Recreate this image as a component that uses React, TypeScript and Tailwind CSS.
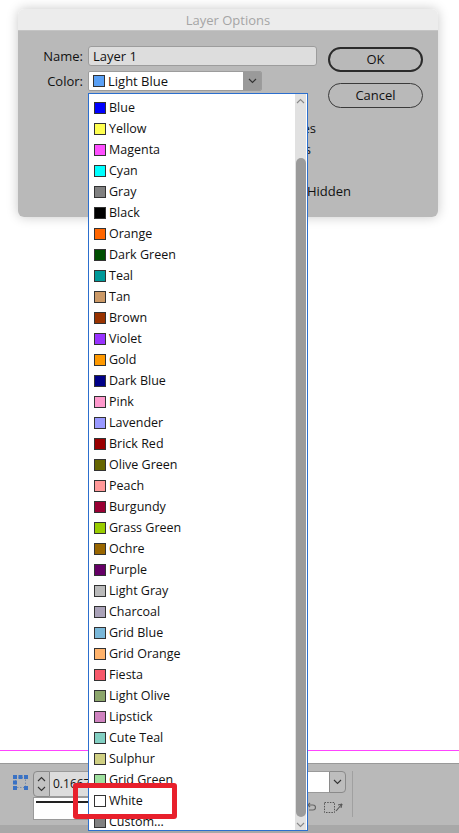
import React from "react";

const items: [string, string][] = [
  ["Blue", "#0000ff"],
  ["Yellow", "#ffff4f"],
  ["Magenta", "#ff4fff"],
  ["Cyan", "#00ffff"],
  ["Gray", "#808080"],
  ["Black", "#000000"],
  ["Orange", "#ff6600"],
  ["Dark Green", "#005000"],
  ["Teal", "#009999"],
  ["Tan", "#cc9966"],
  ["Brown", "#993300"],
  ["Violet", "#9933ff"],
  ["Gold", "#ff9900"],
  ["Dark Blue", "#000087"],
  ["Pink", "#ff99cc"],
  ["Lavender", "#9999ff"],
  ["Brick Red", "#990000"],
  ["Olive Green", "#666600"],
  ["Peach", "#ff9999"],
  ["Burgundy", "#990033"],
  ["Grass Green", "#99cc00"],
  ["Ochre", "#996600"],
  ["Purple", "#660066"],
  ["Light Gray", "#bababa"],
  ["Charcoal", "#aaa2b8"],
  ["Grid Blue", "#7ab8d9"],
  ["Grid Orange", "#ffb36b"],
  ["Fiesta", "#f7596b"],
  ["Light Olive", "#8ca66b"],
  ["Lipstick", "#cf82bf"],
  ["Cute Teal", "#82cfc2"],
  ["Sulphur", "#cfcf82"],
  ["Grid Green", "#9ee09e"],
  ["White", "#ffffff"],
  ["Custom...", "#808080"],
];

function ChevDown({ color = "#333" }: { color?: string }) {
  return (
    <svg width="9" height="6" viewBox="0 0 9 6">
      <path d="M1 1 L4.5 4.5 L8 1" fill="none" stroke={color} strokeWidth="1.1" />
    </svg>
  );
}
function ChevUp({ color = "#333" }: { color?: string }) {
  return (
    <svg width="9" height="6" viewBox="0 0 9 6">
      <path d="M1 5 L4.5 1.5 L8 5" fill="none" stroke={color} strokeWidth="1.1" />
    </svg>
  );
}

export default function App() {
  return (
    <div
      className="relative w-[459px] h-[833px] overflow-hidden bg-white text-[#111]"
      style={{ fontFamily: '"Open Sans", "DejaVu Sans", sans-serif' }}
    >
      {/* Dialog */}
      <div className="pt-[9px] pl-[18px]">
        <div className="w-[420px] h-[208px] rounded-[6px] overflow-hidden shadow-[0_0_12px_rgba(0,0,0,0.22)] flex flex-col">
          <div className="h-[22px] bg-[#ececec] border-b border-[#c4c4c4] text-center text-[13px] leading-[22px] text-[#a5a5a5]">
            Layer Options
          </div>
          <div className="flex-1 bg-[#b9b9b9] flex">
            <div className="w-[299px] flex flex-col">
              <div className="mt-[15px] flex items-center h-[20px]">
                <div className="w-[65px] text-right text-[13px] leading-[20px]">Name:</div>
                <div className="ml-[5px] w-[229px] h-[20px] bg-[#dddddd] border border-[#9c9c9c] rounded-[3px] text-[13px] leading-[18px] pl-[4px]">
                  Layer 1
                </div>
              </div>
              <div className="mt-[5px] flex items-center h-[20px]">
                <div className="w-[65px] text-right text-[13px] leading-[20px]">Color:</div>
                <div className="ml-[5px] w-[174px] h-[20px] flex border border-[#9c9c9c] rounded-[2px] overflow-hidden">
                  <div className="flex-1 bg-white flex items-center pl-[4px] gap-[3px]">
                    <span className="w-[12px] h-[12px] bg-[#5aa0f5] border border-[#333]" />
                    <span className="text-[13px] leading-[18px]">Light Blue</span>
                  </div>
                  <div className="w-[18px] bg-[#9a9a9a] flex items-center justify-center">
                    <ChevDown />
                  </div>
                </div>
              </div>
              <div className="mt-[27px] flex flex-col text-[13px] leading-[21px] whitespace-nowrap">
                <div className="h-[21px] text-right pr-[1px]">es</div>
                <div className="h-[21px] text-right pr-[6px]">s</div>
                <div className="h-[21px]" />
                <div className="h-[21px] w-[333px] text-right">Hidden</div>
              </div>
            </div>
            <div className="ml-[11px] flex flex-col">
              <div className="mt-[16px] w-[95px] h-[25px] rounded-full border-2 border-[#2b2b2b] flex items-center justify-center text-[13px]">
                OK
              </div>
              <div className="mt-[11px] w-[95px] h-[25px] rounded-full border border-[#3a3a3a] flex items-center justify-center text-[13px]">
                Cancel
              </div>
            </div>
          </div>
        </div>
      </div>

      {/* Canvas area with guide */}
      <div className="mt-[533px] h-px bg-[#ff44ff]" />
      <div className="h-[12px]" />

      {/* Bottom toolbar */}
      <div className="h-[70px] flex flex-col">
        <div className="h-[62px] bg-[#b9b9b9] border-t border-[#999999] flex items-start pt-[7px]">
          <div className="pl-[13px] pt-[4px]">
            <svg width="15" height="15" viewBox="0 0 15 15">
              <rect x="2.5" y="2.5" width="10" height="10" fill="none" stroke="#7a8ca8" strokeWidth="1" strokeDasharray="1.5 1.5" />
              <rect x="0" y="0" width="4" height="4" fill="#3a72c4" />
              <rect x="11" y="0" width="4" height="4" fill="#3a72c4" />
              <rect x="0" y="11" width="4" height="4" fill="#3a72c4" />
              <rect x="11" y="11" width="4" height="4" fill="#3a72c4" />
              <rect x="5.5" y="0" width="4" height="4" fill="#3a72c4" />
              <rect x="0" y="5.5" width="4" height="4" fill="#3a72c4" />
            </svg>
          </div>
          <div className="ml-[5px] flex flex-col">
            <div className="flex h-[26px]">
              <div className="w-[17px] h-[26px] border border-[#8a8a8a] rounded-l-[4px] bg-[#c2c2c2] flex flex-col items-center justify-center gap-[4px]">
                <ChevUp />
                <ChevDown />
              </div>
              <div className="w-[60px] h-[26px] bg-[#dddddd] border-y border-r border-[#9a9a9a] text-[12px] leading-[24px] pl-[3px]">
                0.1667 in
              </div>
            </div>
            <div className="w-[77px] h-[23px] bg-white border border-[#9a9a9a] relative">
              <div className="absolute left-[2px] right-0 top-[3px] h-[2px] bg-[#222]" />
            </div>
          </div>
          <div className="flex-1" />
          <div className="flex flex-col">
            <div className="flex h-[22px]">
              <div className="w-[40px] bg-white border-y border-l border-[#9a9a9a]" />
              <div className="w-[17px] border border-[#8a8a8a] rounded-r-[4px] bg-[#bdbdbd] flex items-center justify-center">
                <ChevDown />
              </div>
            </div>
            <div className="mt-[8px] flex items-center gap-[8px] pl-[17px]">
              <svg width="10" height="10" viewBox="0 0 10 10">
                <path d="M2 3 H7 A2.5 2.5 0 0 1 7 8 H3" fill="none" stroke="#666" strokeWidth="1.2" />
                <path d="M4 1 L2 3 L4 5" fill="none" stroke="#666" strokeWidth="1.2" />
              </svg>
              <svg width="19" height="12" viewBox="0 0 19 12">
                <rect x="0.5" y="1.5" width="10" height="10" fill="none" stroke="#555" strokeWidth="1" strokeDasharray="1.5 1.2" />
                <path d="M12 10 L18 3" stroke="#555" strokeWidth="1.1" />
                <path d="M14 4 L18 3 L17 7" fill="none" stroke="#555" strokeWidth="1" />
              </svg>
            </div>
          </div>
          <div className="ml-[6px] mr-[106px] w-px h-[46px] bg-[#a0a0a0]" />
        </div>
        <div className="h-[8px] bg-[#a8a8a8]" />
      </div>

      {/* Dropdown list overlay */}
      <div className="absolute left-[88px] top-[93px] w-[220px] h-[738px] bg-white border border-[#2c6fce] overflow-hidden">
        <div className="pt-[3px] flex flex-col">
          {items.map(([name, color]) => (
            <div key={name} className="h-[21px] flex items-center pl-[5px]">
              <span
                className="w-[12px] h-[12px] border border-[#333] shrink-0"
                style={{ backgroundColor: color }}
              />
              <span className="ml-[3px] text-[12.5px] leading-[21px] text-[#111]">{name}</span>
            </div>
          ))}
        </div>
        <div className="absolute right-[1px] top-0 bottom-0 w-[11px] bg-[#e1e1e1] flex flex-col items-center">
          <div className="mt-[4px]">
            <ChevUp color="#888" />
          </div>
          <div className="mt-[54px] w-[10px] h-[659px] rounded-full bg-[#9b9b9b]" />
          <div className="mt-[5px]">
            <ChevDown color="#888" />
          </div>
        </div>
      </div>

      {/* Red highlight */}
      <div className="absolute left-[73px] top-[783px] w-[104px] h-[36px] border-[5px] border-[#e8202c] rounded-[3px]" />
    </div>
  );
}
